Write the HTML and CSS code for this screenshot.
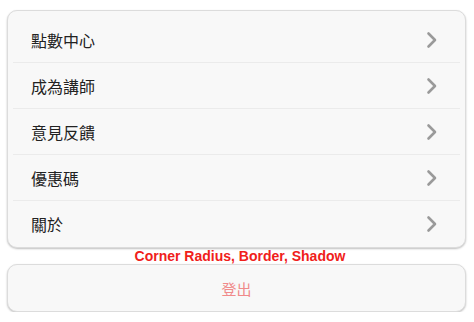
FILE: index.html
```html
<!DOCTYPE html>
<html>
<head>
<meta charset="utf-8">
<link rel="stylesheet" href="styles.css">
</head>
<body>
<div class="page">
  <div class="card menu">
    <div class="row"><span class="label">點數中心</span><svg class="chev" width="12" height="18" viewBox="0 0 12 18"><path d="M2.5 2.5 L9 9 L2.5 15.5" fill="none" stroke="#9a9a9a" stroke-width="2.6" stroke-linecap="round" stroke-linejoin="round"/></svg></div>
    <div class="row"><span class="label">成為講師</span><svg class="chev" width="12" height="18" viewBox="0 0 12 18"><path d="M2.5 2.5 L9 9 L2.5 15.5" fill="none" stroke="#9a9a9a" stroke-width="2.6" stroke-linecap="round" stroke-linejoin="round"/></svg></div>
    <div class="row"><span class="label">意見反饋</span><svg class="chev" width="12" height="18" viewBox="0 0 12 18"><path d="M2.5 2.5 L9 9 L2.5 15.5" fill="none" stroke="#9a9a9a" stroke-width="2.6" stroke-linecap="round" stroke-linejoin="round"/></svg></div>
    <div class="row"><span class="label">優惠碼</span><svg class="chev" width="12" height="18" viewBox="0 0 12 18"><path d="M2.5 2.5 L9 9 L2.5 15.5" fill="none" stroke="#9a9a9a" stroke-width="2.6" stroke-linecap="round" stroke-linejoin="round"/></svg></div>
    <div class="row last"><span class="label">關於</span><svg class="chev" width="12" height="18" viewBox="0 0 12 18"><path d="M2.5 2.5 L9 9 L2.5 15.5" fill="none" stroke="#9a9a9a" stroke-width="2.6" stroke-linecap="round" stroke-linejoin="round"/></svg></div>
  </div>
  <div class="note">Corner Radius, Border, Shadow</div>
  <div class="card logout">登出</div>
</div>
</body>
</html>
```
FILE: styles.css
```css
html, body {
  margin: 0;
  padding: 0;
  background: #ffffff;
}
.page {
  padding: 10px 8px 0 7px;
  display: flex;
  flex-direction: column;
  font-family: "Liberation Sans", "Noto Sans CJK TC", sans-serif;
}
.card {
  background: #f8f8f8;
  border: 1px solid #dcdcdc;
  border-radius: 10px;
  box-shadow: 0 1px 2px rgba(0,0,0,0.25);
  box-sizing: border-box;
}
.menu {
  padding-top: 6px;
  height: 238px;
  display: flex;
  flex-direction: column;
}
.row {
  height: 46px;
  flex: none;
  display: flex;
  align-items: center;
  justify-content: space-between;
  margin-left: 5px;
  margin-right: 5px;
  padding-left: 18px;
  padding-right: 22px;
  border-bottom: 1px solid #ebebeb;
  box-sizing: border-box;
}
.row.last {
  border-bottom: none;
}
.label {
  font-family: "Noto Sans CJK TC", sans-serif;
  font-size: 16px;
  color: #222222;
}
.chev {
  display: block;
}
.note {
  text-align: center;
  font-weight: bold;
  font-size: 14px;
  color: #f0201a;
  height: 16px;
  line-height: 16px;
  padding-left: 7px;
}
.logout {
  height: 48px;
  display: flex;
  align-items: center;
  justify-content: center;
  font-family: "Noto Sans CJK TC", sans-serif;
  font-size: 15px;
  color: #f08a8a;
}
```
